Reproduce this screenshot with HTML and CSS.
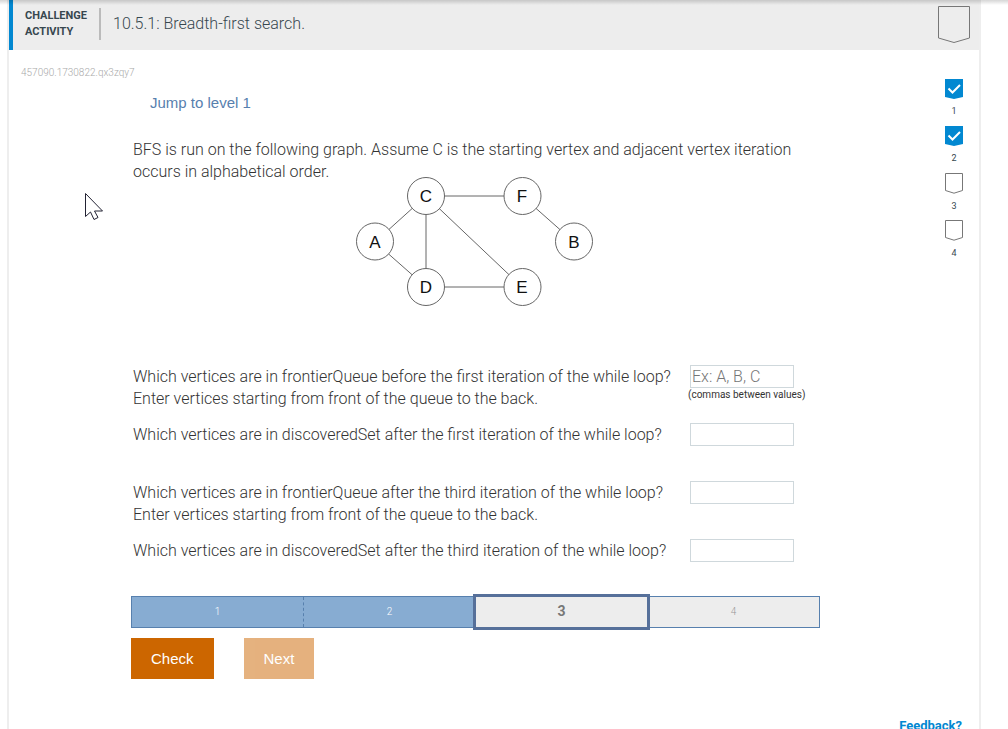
FILE: index.html
```html
<!DOCTYPE html>
<html lang="en">
	<head>
		<meta charset="UTF-8" />
		<meta name="viewport" content="width=device-width, initial-scale=1.0" />

		<title>10.5.1: Breadth-first search.</title>

		<link rel="stylesheet" href="styles.css">
	</head>

	<body>
		<div class="page">
			<header class="header">
				<div class="activity-type">Challenge activity</div>
				<h1 class="title">10.5.1: Breadth-first search.</h1>
				<svg class="chevron" width="34" height="38" viewBox="0 0 34 38">
					<path d="M1.5 .5h31v31.5l-15.500 4.500-15.500-4.500z" fill="none" stroke="#777" />
				</svg>
			</header>

			<div class="columns">
				<main class="content">
					<div class="resource-id">457090.1730822.qx3zqy7</div>

					<div class="activity">
						<a class="jump" href="#level1">Jump to level 1</a>

						<p class="prompt">BFS is run on the following graph. Assume C is the starting vertex and adjacent vertex iteration occurs in alphabetical order.</p>

						<svg class="graph" width="240" height="130" viewBox="356 177 240 130">
							<g class="edges">
								<path d="M426 196H522M426 196L375 242M426 196V287M426 196L522 287M522 196L574 242M375 242L426 287M426 287H522" />
							</g>
							<g class="nodes">
								<circle cx="375" cy="241.500" r="18.500" />
								<circle cx="574" cy="241.500" r="18.500" />
								<circle cx="426" cy="196" r="18.500" />
								<circle cx="426" cy="287" r="18.500" />
								<circle cx="522.500" cy="287" r="18.500" />
								<circle cx="522.500" cy="196" r="18.500" />
							</g>
							<g class="names">
								<text x="375" y="248">A</text>
								<text x="574" y="248">B</text>
								<text x="426" y="202">C</text>
								<text x="426" y="293">D</text>
								<text x="522" y="293">E</text>
								<text x="522" y="202">F</text>
							</g>
						</svg>

						<form class="questions">
							<label for="q1">Which vertices are in frontierQueue before the first iteration of the while loop?<br>Enter vertices starting from front of the queue to the back.</label>
							<div class="answer">
								<input id="q1" type="text" placeholder="Ex: A, B, C">
								<span class="hint">(commas between values)</span>
							</div>

							<label for="q2">Which vertices are in discoveredSet after the first iteration of the while loop?</label>
							<div class="answer"><input id="q2" type="text"></div>

							<label for="q3">Which vertices are in frontierQueue after the third iteration of the while loop?<br>Enter vertices starting from front of the queue to the back.</label>
							<div class="answer"><input id="q3" type="text"></div>

							<label for="q4">Which vertices are in discoveredSet after the third iteration of the while loop?</label>
							<div class="answer"><input id="q4" type="text"></div>
						</form>

						<div class="progress">
							<div class="segment done">1</div>
							<div class="segment done">2</div>
							<div class="segment current">3</div>
							<div class="segment">4</div>
						</div>

						<div class="buttons">
							<button class="button" type="button">Check</button>
							<button class="button" type="button" disabled>Next</button>
						</div>
					</div>
				</main>

				<aside class="levels">
					<div class="level">
						<svg width="18" height="20" viewBox="0 0 18 20"><path d="M0 0h18v18l-9 2-9-2z" fill="#0288d1" /><path d="M3.500 9.500l4 4 7.500-7.500" fill="none" stroke="#fff" stroke-width="2" /></svg>
						<span class="level-number">1</span>
					</div>
					<div class="level">
						<svg width="18" height="20" viewBox="0 0 18 20"><path d="M0 0h18v18l-9 2-9-2z" fill="#0288d1" /><path d="M3.500 9.500l4 4 7.500-7.500" fill="none" stroke="#fff" stroke-width="2" /></svg>
						<span class="level-number">2</span>
					</div>
					<div class="level">
						<svg width="18" height="21" viewBox="0 0 18 21"><path d="M.5 .5h17v17l-8.500 2.700-8.500-2.700z" fill="none" stroke="#777" /></svg>
						<span class="level-number">3</span>
					</div>
					<div class="level">
						<svg width="18" height="21" viewBox="0 0 18 21"><path d="M.5 .5h17v17l-8.500 2.700-8.500-2.700z" fill="none" stroke="#777" /></svg>
						<span class="level-number">4</span>
					</div>
				</aside>
			</div>

			<footer class="footer">
				<a class="feedback" href="#feedback">Feedback?</a>
			</footer>
		</div>

		<svg class="pointer" width="20" height="28" viewBox="0 0 20 28">
			<path d="M.5 .5v23l5-4.500 3.500 7.500 4-2-3.500-6.500h8z" fill="#fff" stroke="#223" />
		</svg>
	</body>
</html>
```
FILE: styles.css
```css
* { box-sizing:border-box }

html, body {
	height:100%;
	margin:0; padding:0;
}

body {
	position:relative;
	overflow:hidden;
	background:#fff; color:#37474f;
	font-family:Roboto, sans-serif;
	font-size:16px; font-weight:300; line-height:22px;
}

/* shadow of the toolbar above the page */
body::before {
	content:"";
	position:absolute; top:0; left:0; right:0;
	height:5px;
	background:linear-gradient(rgba(0,0,0,.16), rgba(0,0,0,0));
}

a { text-decoration:none }
svg { display:block }

.page {
	margin:0 27px 0 7px;
	border:solid #eee;
	border-width:0 2px;
}

.header {
	display:flex;
	align-items:flex-start;
	height:50px;
	padding:6px 8px 0 12px;
	border-left:4px solid #0288d1;
	background:#ededed;
}

.activity-type {
	width:76px;
	margin-top:2px;
	border-right:2px solid #bbb;
	font-size:11px; font-weight:700; line-height:16px;
	text-transform:uppercase;
}

.title {
	margin:7px auto 0 12px;
	font-size:16px; font-weight:300; line-height:22px;
}

.columns { display:flex }
.content { flex:1; padding:13px 0 0 12px }

.resource-id {
	color:#aaa;
	font-size:10px; line-height:20px;
}

.activity {
	max-width:689px;
	margin:9px 0 0 110px;
	color:#333;
}

.jump {
	display:block;
	margin-left:19px;
	color:#5780ae;
	font-size:15px; font-weight:400;
	font-family:"Liberation Sans", Arial, sans-serif;
}

.prompt { margin:25px 2px 0 }

/* the drawing reaches up into the last line of the prompt */
.graph { margin:-6px auto 58px }
.edges { fill:none; stroke:#666 }
.nodes { fill:#fff; stroke:#666 }
.names {
	fill:#111;
	font-family:"Liberation Sans", Arial, sans-serif;
	font-size:17px; font-weight:400;
	text-anchor:middle;
}

.questions {
	display:grid;
	grid-template-columns:557px 1fr;
	grid-auto-rows:58px;
	padding-left:2px;
}

.questions label { padding-top:1px }

.answer input {
	display:block;
	width:104px; height:23px;
	padding:0 1px;
	border:1px solid #cfd8dc;
	font:inherit;
	color:inherit;
}

.answer input::placeholder { color:#757575 }

.hint {
	display:block;
	margin:1px 0 0 -2px;
	font-size:10px; font-weight:400; line-height:12px;
	white-space:nowrap;
}

.progress {
	display:flex;
	height:32px;
	margin-top:-1px;
	border:1px solid #5780ae;
	background:#ededed;
}

.segment {
	flex:1;
	color:#999;
	font-size:10px; line-height:30px;
	text-align:center;
}

.done { background:#87acd2; color:#fff }
.done:first-child { border-right:1px dashed #5780ae }

.current {
	margin:-3px -2px;
	border:3px solid #56709a;
	background:#ededed; color:#777;
	font-size:14px; font-weight:700; line-height:28px;
}

.buttons {
	display:flex;
	gap:30px;
	margin-top:10px;
}

.button {
	height:41px;
	padding:0 20px;
	border:0;
	background:#cc6600; color:#fff;
	font:400 15px/41px "Liberation Sans", Arial, sans-serif;
}

.button:disabled { opacity:.5 }

.levels {
	width:50px;
	padding-top:29px;
}

.level {
	display:flex;
	flex-direction:column;
	align-items:center;
	height:47px;
}

.level-number {
	margin-top:6px;
	font-size:9px; font-weight:400; line-height:12px;
}

.footer {
	padding:35px 17px 0 0;
	text-align:right;
}

.feedback {
	color:#0288d1;
	font-size:13px; font-weight:700;
}

.pointer { position:absolute; left:85px; top:193px }
```
